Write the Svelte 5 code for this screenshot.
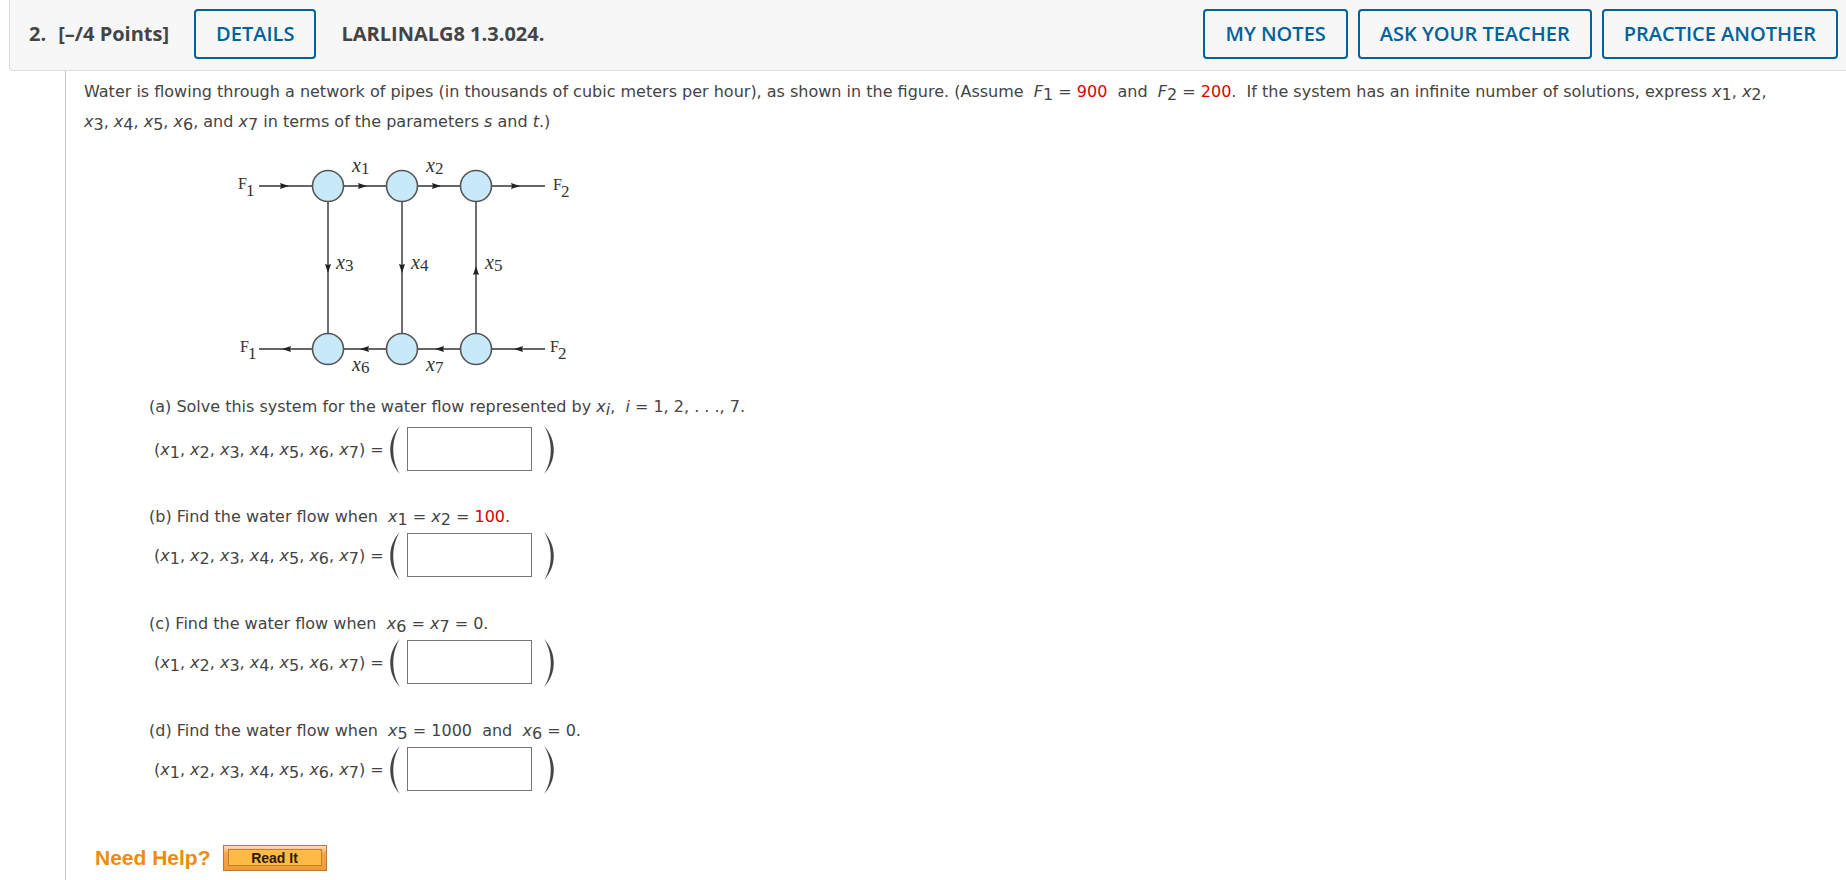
<script>
  const actions = ['MY NOTES', 'ASK YOUR TEACHER', 'PRACTICE ANOTHER'];
  const unknowns = [1, 2, 3, 4, 5, 6, 7];
  const columns = [108, 182, 256];
  const rows = [41, 204];
  const arrows = [
    [69, 41, 0], [147, 41, 0], [221, 41, 0], [300, 41, 0],
    [62, 204, 180], [140, 204, 180], [215, 204, 180], [294, 204, 180],
    [108, 128, 90], [182, 128, 90], [256, 121, 270]
  ];
  const labels = [
    [1, 132, 27], [2, 206, 27],
    [3, 116, 124], [4, 191, 124], [5, 265, 124],
    [6, 132, 226], [7, 206, 226]
  ];
  const flows = [
    [1, 18, 44], [2, 333, 45], [1, 20, 207], [2, 330, 207]
  ];
  let answers = $state({ a: '', b: '', c: '', d: '' });
</script>

{#snippet v(name, n)}<i>{name}</i><sub>{n}</sub>{/snippet}

{#snippet answer(part)}
  <div class="answer">
    <label for="answer-{part}">({#each unknowns as n}{@render v('x', n)}{#if n < 7}{', '}{/if}{/each}) =</label>
    <svg class="paren" viewBox="0 0 12 48" aria-hidden="true"><path d="M11 0C-2 13-2 35 11 48C2 35 2 13 11 0Z" /></svg>
    <input id="answer-{part}" type="text" bind:value={answers[part]} />
    <svg class="paren close" viewBox="0 0 12 48" aria-hidden="true"><path d="M1 0C14 13 14 35 1 48C10 35 10 13 1 0Z" /></svg>
  </div>
{/snippet}

<main>
  <header>
    <h2>2.</h2>
    <strong class="points">[–/4 Points]</strong>
    <button type="button">DETAILS</button>
    <strong class="code">LARLINALG8 1.3.024.</strong>
    <div class="actions">
      {#each actions as text}<button type="button">{text}</button>{/each}
    </div>
  </header>

  <section class="body">
    <p class="intro">Water is flowing through a network of pipes (in thousands of cubic meters per hour), as shown in the figure. (Assume &nbsp;{@render v('F', 1)} = <em>900</em>&nbsp; and &nbsp;{@render v('F', 2)} = <em>200</em>.&nbsp; If the system has an infinite number of solutions, express {@render v('x', 1)}, {@render v('x', 2)}, {@render v('x', 3)}, {@render v('x', 4)}, {@render v('x', 5)}, {@render v('x', 6)}, and {@render v('x', 7)} in terms of the parameters <i>s</i> and <i>t</i>.)</p>

    <svg class="figure" viewBox="0 0 360 240" role="img" aria-label="Network of pipes with six junctions">
      {#each rows as y}<path class="pipe" d="M39 {y}H325" />{/each}
      {#each columns as x}<path class="pipe" d="M{x} 41V204" />{/each}
      {#each columns as x}{#each rows as y}<circle cx={x} cy={y} r="15.5" />{/each}{/each}
      {#each arrows as [x, y, turn]}<path class="head" d="M0 0L-9-3L-8 0L-9 3Z" transform="translate({x} {y}) rotate({turn})" />{/each}
      {#each labels as [n, x, y]}<text {x} {y}><tspan class="it">x</tspan><tspan dy="2">{n}</tspan></text>{/each}
      {#each flows as [n, x, y]}<text {x} {y}><tspan class="flow">F</tspan><tspan dx="-1" dy="7">{n}</tspan></text>{/each}
    </svg>

    <div class="parts">
      <div class="part first">
        <p>(a) Solve this system for the water flow represented by <i>x</i><sub><i>i</i></sub>,&nbsp; <i>i</i> = 1, 2, . . ., 7.</p>
        {@render answer('a')}
      </div>
      <div class="part">
        <p>(b) Find the water flow when &nbsp;{@render v('x', 1)} = {@render v('x', 2)} = <em>100</em>.</p>
        {@render answer('b')}
      </div>
      <div class="part">
        <p>(c) Find the water flow when &nbsp;{@render v('x', 6)} = {@render v('x', 7)} = 0.</p>
        {@render answer('c')}
      </div>
      <div class="part">
        <p>(d) Find the water flow when &nbsp;{@render v('x', 5)} = 1000&nbsp; and &nbsp;{@render v('x', 6)} = 0.</p>
        {@render answer('d')}
      </div>
    </div>

    <div class="help">
      <strong>Need Help?</strong>
      <button type="button" class="read">Read It</button>
    </div>
  </section>
</main>

<style>
  :global(body) { margin: 0; background: #fff; }
  main { display: flex; flex-direction: column; box-sizing: border-box; min-height: 100vh; padding-left: 9px; color: #444; font: 16px/30px "DejaVu Sans", Verdana, sans-serif; }
  header { display: flex; align-items: center; box-sizing: border-box; height: 71px; padding: 0 8px 3px 19px; background: #f7f7f7; border: solid #ddd; border-width: 0 0 1px 1px; border-radius: 0 0 0 4px; font: 700 20px/28px "Open Sans", sans-serif; }
  h2 { margin: 0 12px 0 0; font: inherit; }
  strong { font-weight: inherit; }
  .points { margin-right: 25px; }
  .code { margin-left: 25px; }
  .actions { display: flex; gap: 10px; margin-left: auto; }
  header button { box-sizing: border-box; height: 50px; padding: 0 20px; background: #f7f7f7; border: 2px solid #006298; border-radius: 4px; color: #006298; font: 600 20px/28px "Open Sans", sans-serif; white-space: nowrap; }
  .body { flex: 1; margin-left: 56px; padding: 6px 12px 0 18px; border-left: 1px solid #c4c4c4; }
  p { margin: 0; }
  .intro { padding-right: 44px; }
  em { color: #d90000; font-style: normal; }
  sub { font-size: 16px; line-height: 0; vertical-align: -3px; }
  .figure { display: block; width: 360px; height: 240px; margin: 8px 0 0 136px; }
  .pipe { fill: none; stroke: #333; stroke-width: 1.4; }
  circle { fill: #c7e9fa; stroke: #555; stroke-width: 1.6; }
  .head { fill: #222; }
  text { fill: #333; font: 17px "Liberation Serif", serif; }
  .it { font-style: italic; font-size: 20px; }
  .flow { font-size: 16px; }
  .parts { margin: 7px 0 0 65px; }
  .part { height: 107px; }
  .part.first { height: 110px; }
  .first .answer { margin-top: 4px; }
  .answer { display: flex; align-items: center; height: 48px; padding-left: 5px; }
  .paren { width: 12px; height: 48px; margin: 0 6px 0 5px; fill: #444; }
  .paren.close { margin: 0 0 0 11px; }
  input { box-sizing: border-box; width: 125px; height: 44px; margin: 0 0 2px; padding: 0 8px; background: #fff; border: 1px solid #767676; border-radius: 0; font: inherit; color: inherit; }
  .help { display: flex; align-items: center; gap: 12px; margin: 20px 0 0 11px; height: 30px; font: bold 21px/26px "Liberation Sans", Arial, sans-serif; color: #f08a0c; }
  .read { position: relative; z-index: 0; box-sizing: border-box; width: 104px; height: 26px; padding: 0; color: #2b1c00; font: bold 14px/16px "Liberation Sans", Arial, sans-serif; background: linear-gradient(#fde0c0, #f9a54c 30%, #f79a33); border: 1px solid #b07a40; }
  .read::before { content: ""; position: absolute; z-index: -1; inset: 3px 4px 4px; background: #fdbb45; border: 1px solid #b9803c; }
</style>
